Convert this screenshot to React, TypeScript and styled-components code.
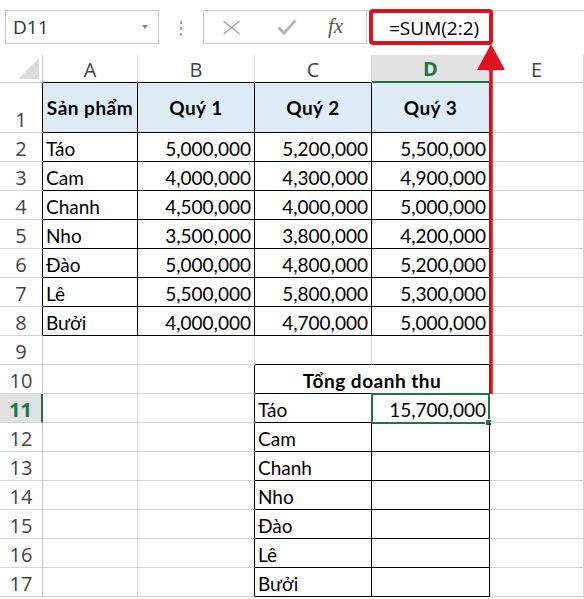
import React from "react";
import styled, { createGlobalStyle, css } from "styled-components";

const GREEN = "#217346";
const GRID = "#d4d4d4";
const HEAD_LINE = "#c8c8c8";
const INK = "#000000";
const RED = "#e0111b";

const Global = createGlobalStyle`
  html, body { margin: 0; padding: 0; background: #ffffff; }
  body { width: 584px; height: 599px; overflow: hidden; }
  #root { width: 584px; height: 599px; }
`;

const Page = styled.div`
  position: relative;
  width: 584px;
  height: 599px;
  overflow: hidden;
  background: #ffffff;
  font-family: Lato, "Noto Sans", sans-serif;
`;

/* ---------- formula bar ---------- */

const FormulaBar = styled.div`
  display: flex;
  align-items: flex-start;
  height: 55px;
  box-sizing: border-box;
  padding: 10px 0 0 5px;
  font-family: "Open Sans", "Noto Sans", sans-serif;
`;

const NameBox = styled.div`
  box-sizing: border-box;
  width: 154px;
  height: 34px;
  border: 1px solid #c6c6c6;
  display: flex;
  align-items: center;
  justify-content: space-between;
  padding: 0 10px 0 7px;
  font-size: 19px;
  color: #333333;
`;

const Caret = styled.span`
  width: 0;
  height: 0;
  border-left: 3px solid transparent;
  border-right: 3px solid transparent;
  border-top: 4px solid #808080;
`;

const Grip = styled.div`
  display: flex;
  flex-direction: column;
  gap: 3px;
  margin: 11px 21px 0 21px;
`;

const GripDot = styled.span`
  width: 2px;
  height: 3px;
  background: #a8a8a8;
`;

const FxBox = styled.div`
  box-sizing: border-box;
  width: 164px;
  height: 34px;
  border: 1px solid #c6c6c6;
  display: flex;
  align-items: center;
  padding-left: 18px;
`;

const IconSlot = styled.span<{ $gap: number }>`
  display: flex;
  margin-right: ${(p) => p.$gap}px;
`;

const FxLabel = styled.span`
  font-family: "Liberation Serif", "DejaVu Serif", serif;
  font-style: italic;
  font-size: 21px;
  color: #555555;
  line-height: 1;
  margin-top: -2px;
`;

const FormulaInput = styled.div`
  flex: 1;
  box-sizing: border-box;
  height: 34px;
  border-top: 1px solid #c6c6c6;
  display: flex;
  align-items: center;
  padding-left: 22px;
  font-size: 19px;
  color: #000000;
`;

/* ---------- sheet ---------- */

const Sheet = styled.div`
  display: grid;
  grid-template-columns: 43px 95px 117px 117px 118px 1fr;
  grid-template-rows: 28px 50px repeat(16, 29px);
`;

type Edge = { $r: string; $b: string; $rw?: number; $bw?: number };

const edges = css<Edge>`
  box-sizing: border-box;
  border-right: ${(p) => p.$rw ?? 1}px solid ${(p) => p.$r};
  border-bottom: ${(p) => p.$bw ?? 1}px solid ${(p) => p.$b};
  display: flex;
  min-width: 0;
  white-space: nowrap;
`;

const headerText = css<{ $sel?: boolean }>`
  font-family: "Open Sans", "Noto Sans", sans-serif;
  font-size: 20px;
  line-height: 20px;
  color: ${(p) => (p.$sel ? GREEN : "#444444")};
  font-weight: ${(p) => (p.$sel ? 700 : 400)};
  background: ${(p) => (p.$sel ? "#e1e1e1" : "#ffffff")};
`;

const Corner = styled.div<Edge>`
  ${edges};
  align-items: flex-end;
  justify-content: flex-end;
  padding: 0 3px 3px 0;
`;

const CornerTriangle = styled.span`
  width: 0;
  height: 0;
  border-left: 21px solid transparent;
  border-bottom: 21px solid #dcdcdc;
`;

const ColHeader = styled.div<Edge & { $sel?: boolean }>`
  ${edges};
  ${headerText};
  justify-content: center;
  align-items: flex-end;
  padding-bottom: 2px;
`;

const RowHeader = styled.div<Edge & { $sel?: boolean }>`
  ${edges};
  ${headerText};
  justify-content: center;
  align-items: flex-end;
  padding-bottom: 2px;
`;

const Cell = styled.div<
  Edge & {
    $align: "left" | "right" | "center";
    $bold?: boolean;
    $fill?: string;
    $span?: number;
    $middle?: boolean;
  }
>`
  ${edges};
  position: relative;
  grid-column: span ${(p) => p.$span ?? 1};
  justify-content: ${(p) =>
    p.$align === "right" ? "flex-end" : p.$align === "center" ? "center" : "flex-start"};
  align-items: ${(p) => (p.$middle ? "center" : "flex-end")};
  padding: 0 3px 1px 3px;
  background: ${(p) => p.$fill ?? "transparent"};
  font-size: 19px;
  line-height: normal;
  font-weight: ${(p) => (p.$bold ? 700 : 400)};
  letter-spacing: ${(p) => (p.$bold ? "0.5px" : "0")};
  color: ${INK};
`;

const SelectionFrame = styled.span`
  position: absolute;
  left: -1px;
  top: -1px;
  right: -1px;
  bottom: -2px;
  border: 2px solid ${GREEN};
  pointer-events: none;
`;

const FillHandle = styled.span`
  position: absolute;
  right: -4px;
  bottom: -4px;
  width: 5px;
  height: 5px;
  background: ${GREEN};
  border: 1px solid #ffffff;
`;

/* ---------- annotation overlay ---------- */

const Highlight = styled.div`
  position: absolute;
  left: 369px;
  top: 9px;
  width: 124px;
  height: 36px;
  box-sizing: border-box;
  border: 4px solid ${RED};
  border-radius: 4px;
  pointer-events: none;
`;

const Arrow = styled.svg`
  position: absolute;
  left: 474px;
  top: 40px;
  pointer-events: none;
`;

/* ---------- data ---------- */

const fruits = ["Táo", "Cam", "Chanh", "Nho", "Đào", "Lê", "Bưởi"];
const quarters = [
  ["5,000,000", "5,200,000", "5,500,000"],
  ["4,000,000", "4,300,000", "4,900,000"],
  ["4,500,000", "4,000,000", "5,000,000"],
  ["3,500,000", "3,800,000", "4,200,000"],
  ["5,000,000", "4,800,000", "5,200,000"],
  ["5,500,000", "5,800,000", "5,300,000"],
  ["4,000,000", "4,700,000", "5,000,000"],
];
const letters = ["A", "B", "C", "D", "E"];
const LAST_ROW = 17;

const inTable = (r: number, c: number) =>
  (r >= 1 && r <= 8 && c >= 1 && c <= 4) || (r >= 10 && r <= 17 && c >= 3 && c <= 4);

type Content = {
  text: string;
  align: "left" | "right" | "center";
  bold?: boolean;
  fill?: string;
  span?: number;
  middle?: boolean;
};

function contentFor(r: number, c: number): Content {
  if (r === 1 && c >= 1 && c <= 4) {
    const t = ["Sản phẩm", "Quý 1", "Quý 2", "Quý 3"][c - 1];
    return { text: t, align: "center", bold: true, fill: "#ddebf7", middle: true };
  }
  if (r >= 2 && r <= 8) {
    if (c === 1) return { text: fruits[r - 2], align: "left" };
    if (c >= 2 && c <= 4) return { text: quarters[r - 2][c - 2], align: "right" };
  }
  if (r === 10 && c === 3) return { text: "Tổng doanh thu", align: "center", bold: true, span: 2 };
  if (r >= 11 && r <= 17) {
    if (c === 3) return { text: fruits[r - 11], align: "left" };
    if (c === 4 && r === 11) return { text: "15,700,000", align: "right" };
  }
  return { text: "", align: "left" };
}

const XIcon = () => (
  <svg width="19" height="15" viewBox="0 0 19 15">
    <path d="M1.5 1 L17.5 14 M17.5 1 L1.5 14" stroke="#a6a6a6" strokeWidth="1.6" fill="none" />
  </svg>
);

const CheckIcon = () => (
  <svg width="20" height="16" viewBox="0 0 20 16">
    <path
      d="M1.5 8.5 L7 14 L18.5 1.5"
      stroke="#b4b4b4"
      strokeWidth="3"
      fill="none"
      strokeLinejoin="miter"
    />
  </svg>
);

export default function App() {
  const cells: React.ReactNode[] = [];

  // header row
  cells.push(<Corner key="corner" $r={HEAD_LINE} $b={HEAD_LINE}><CornerTriangle /></Corner>);
  letters.forEach((l, i) => {
    const c = i + 1;
    const sel = c === 4;
    cells.push(
      <ColHeader
        key={`h${c}`}
        $sel={sel}
        $r={GRID}
        $b={sel ? GREEN : inTable(1, c) ? INK : HEAD_LINE}
        $bw={sel ? 2 : 1}
      >
        {l}
      </ColHeader>
    );
  });

  for (let r = 1; r <= LAST_ROW; r++) {
    const selRow = r === 11;
    cells.push(
      <RowHeader
        key={`r${r}`}
        $sel={selRow}
        $r={selRow ? GREEN : inTable(r, 1) ? INK : HEAD_LINE}
        $rw={selRow ? 2 : 1}
        $b={GRID}
      >
        {r}
      </RowHeader>
    );
    for (let c = 1; c <= 5; c++) {
      if (r === 10 && c === 4) continue;
      const ct = contentFor(r, c);
      const lastCol = c + (ct.span ?? 1) - 1;
      const right = inTable(r, lastCol) || inTable(r, lastCol + 1) ? INK : GRID;
      const bottom = inTable(r, c) || inTable(r + 1, c) ? INK : GRID;
      const selected = r === 11 && c === 4;
      cells.push(
        <Cell
          key={`c${r}-${c}`}
          $r={right}
          $b={bottom}
          $align={ct.align}
          $bold={ct.bold}
          $fill={ct.fill}
          $span={ct.span}
          $middle={ct.middle}
        >
          {ct.text}
          {selected && (
            <SelectionFrame>
              <FillHandle />
            </SelectionFrame>
          )}
        </Cell>
      );
    }
  }

  return (
    <Page>
      <Global />
      <FormulaBar>
        <NameBox>
          <span>D11</span>
          <Caret />
        </NameBox>
        <Grip>
          <GripDot />
          <GripDot />
          <GripDot />
        </Grip>
        <FxBox>
          <IconSlot $gap={36}>
            <XIcon />
          </IconSlot>
          <IconSlot $gap={31}>
            <CheckIcon />
          </IconSlot>
          <FxLabel>fx</FxLabel>
        </FxBox>
        <FormulaInput>=SUM(2:2)</FormulaInput>
      </FormulaBar>
      <Sheet>{cells}</Sheet>
      <Highlight />
      <Arrow width="34" height="356" viewBox="0 0 34 356">
        <rect x="15.25" y="26" width="3.5" height="328" fill={RED} />
        <polygon points="17,4 3,30 31,30" fill={RED} />
      </Arrow>
    </Page>
  );
}
